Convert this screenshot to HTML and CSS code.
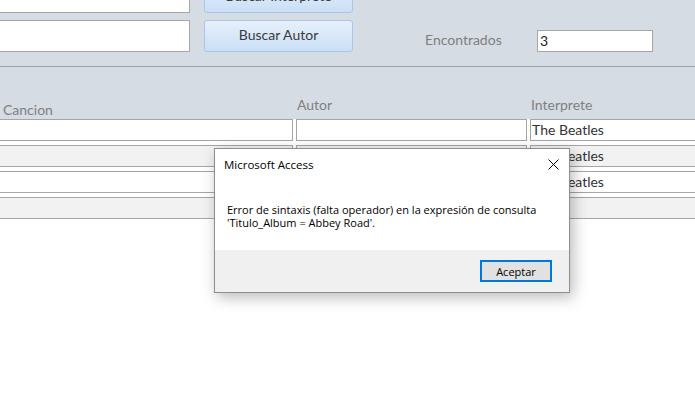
FILE: index.html
```html
<!DOCTYPE html>
<html lang="es">
<head>
<meta charset="utf-8">
<title>Access</title>
<link rel="stylesheet" href="styles.css">
</head>
<body>
<div class="form">
  <div class="top">
    <div class="ctl-row row-a">
      <div class="tb wide"></div>
      <div class="btn">Buscar Interprete</div>
    </div>
    <div class="ctl-row row-b">
      <div class="tb wide"></div>
      <div class="btn">Buscar Autor</div>
      <div class="lbl">Encontrados</div>
      <div class="tb count">3</div>
    </div>
  </div>
  <div class="header">
    <div class="h h-cancion">Cancion</div>
    <div class="h">Autor</div>
    <div class="h">Interprete</div>
  </div>
  <div class="rows">
    <div class="row"><div class="cell"></div><div class="cell"></div><div class="cell">The Beatles</div></div>
    <div class="row alt"><div class="cell"></div><div class="cell"></div><div class="cell">The Beatles</div></div>
    <div class="row"><div class="cell"></div><div class="cell"></div><div class="cell">The Beatles</div></div>
    <div class="row alt"><div class="cell"></div><div class="cell"></div><div class="cell"></div></div>
  </div>
</div>

<div class="dialog">
  <div class="dlg-title">
    <span class="dlg-caption">Microsoft Access</span>
    <svg class="dlg-close" width="11" height="11" viewBox="0 0 11 11"><path d="M0.5 0.5 L10.5 10.5 M10.5 0.5 L0.5 10.5" stroke="#000" stroke-width="1" fill="none"/></svg>
  </div>
  <div class="dlg-body">
    <p class="dlg-msg">Error de sintaxis (falta operador) en la expresión de consulta<br>'Titulo_Album = Abbey Road'.</p>
  </div>
  <div class="dlg-foot">
    <div class="dlg-btn">Aceptar</div>
  </div>
</div>
</body>
</html>
```

FILE: styles.css
```css
html, body {
  margin: 0;
  padding: 0;
  background: #ffffff;
  width: 695px;
  height: 405px;
  overflow: hidden;
}

body {
  font-family: Lato, "Open Sans", sans-serif;
  position: relative;
}

.top {
  background: #d6dce4;
  border-bottom: 1px solid #a6a6a6;
  padding-bottom: 14px;
}

.ctl-row {
  display: flex;
  gap: 14px;
  height: 32px;
}

.row-a {
  margin-top: -19px;
}

.row-b {
  margin-top: 7px;
}

.tb {
  box-sizing: border-box;
  background: #ffffff;
  border: 1px solid #a6a6a6;
}

.tb.wide {
  width: 200px;
  height: 32px;
  margin-left: -10px;
}

.btn {
  box-sizing: border-box;
  width: 149px;
  height: 32px;
  padding-bottom: 3px;
  border: 1px solid #a7c7ea;
  border-radius: 3px;
  background: linear-gradient(#e7f0fb, #c9dff6);
  color: #3a3a3a;
  font-size: 14px;
  display: flex;
  align-items: center;
  justify-content: center;
}

.lbl {
  margin-left: 58px;
  width: 98px;
  margin-top: 10px;
  line-height: 19px;
  height: 20px;
  font-size: 14px;
  color: #7f7f7f;
}

.tb.count {
  width: 116px;
  height: 22px;
  margin-top: 10px;
  font-size: 14px;
  line-height: 20px;
  padding-left: 2px;
  color: #222;
}

.header {
  height: 52px;
  background: #d6dce4;
  display: grid;
  grid-template-columns: 303px 231px 1fr;
  column-gap: 3px;
  margin-left: -10px;
  margin-right: -10px;
  align-items: end;
}

.h {
  font-size: 14px;
  color: #808080;
  line-height: 16px;
  padding-left: 1px;
  margin-bottom: 6px;
}

.h-cancion {
  padding-left: 13px;
  margin-bottom: 1px;
}

.rows {
  margin-left: -10px;
  margin-right: -10px;
}

.row {
  display: grid;
  grid-template-columns: 303px 231px 1fr;
  column-gap: 3px;
  height: 22px;
  margin-bottom: 4px;
}

.cell {
  box-sizing: border-box;
  height: 22px;
  border: 1px solid #a6a6a6;
  background: #ffffff;
  font-size: 14px;
  line-height: 19px;
  padding-left: 1px;
  color: #333333;
}

.row.alt .cell {
  background: #f2f2f2;
}

.dialog {
  position: absolute;
  left: 214px;
  top: 148px;
  width: 356px;
  height: 145px;
  box-sizing: border-box;
  border: 1px solid #8e8e8e;
  background: #ffffff;
  box-shadow: 3px 4px 14px rgba(0, 0, 0, 0.28);
  display: flex;
  flex-direction: column;
  font-family: "Open Sans", "Noto Sans", sans-serif;
  font-size: 11px;
  color: #000;
}

.dlg-title {
  height: 30px;
  display: flex;
  align-items: center;
  justify-content: space-between;
  padding-left: 9px;
  padding-right: 10px;
}

.dlg-caption {
  font-size: 11.5px;
}

.dlg-close {
  display: block;
}

.dlg-body {
  flex: 1;
  padding-left: 12px;
}

.dlg-msg {
  margin: 24px 0 0 0;
  line-height: 13px;
}

.dlg-foot {
  height: 42px;
  background: #f0f0f0;
  display: flex;
  justify-content: flex-end;
  align-items: flex-start;
  padding-right: 17px;
}

.dlg-btn {
  box-sizing: border-box;
  margin-top: 10px;
  width: 72px;
  height: 22px;
  border: 2px solid #0078d7;
  background: #e1e1e1;
  display: flex;
  align-items: center;
  justify-content: center;
}
```
